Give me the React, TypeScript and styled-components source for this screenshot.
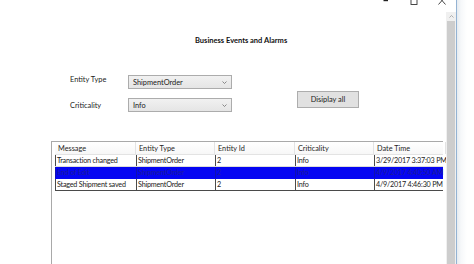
import React from "react";
import styled, { createGlobalStyle } from "styled-components";

const Global = createGlobalStyle`
  html, body { margin: 0; padding: 0; background: #ffffff; }
  body { font-family: Lato, "Noto Sans", "Liberation Sans", sans-serif; color: #1a1a1a; }
  * { box-sizing: border-box; }
`;

const Page = styled.div`
  display: flex;
  width: 474px;
  height: 264px;
  overflow: hidden;
`;

const Window = styled.div`
  width: 457px;
  display: flex;
  flex-direction: column;
  border-right: 1px solid #94b3d3;
  background: #ffffff;
`;

const Outside = styled.div`
  flex: 1;
  background: linear-gradient(to right, #e6ebf0 0px, #f6f8fa 4px, #ffffff 10px);
`;

const TitleBar = styled.div`
  height: 12px;
  display: flex;
  justify-content: flex-end;
  flex-shrink: 0;
`;

const Control = styled.div`
  width: 28px;
  height: 12px;
  display: flex;
  justify-content: center;
  align-items: flex-start;
`;

const Body = styled.div`
  flex: 1;
  display: flex;
  min-height: 0;
`;

const Content = styled.div`
  flex: 1;
  display: flex;
  flex-direction: column;
  overflow: hidden;
  min-width: 0;
`;

const ScrollBar = styled.div`
  width: 10px;
  display: flex;
  flex-direction: column;
  background: #f0f0f0;
`;

const ScrollArrow = styled.div`
  height: 9px;
  display: flex;
  align-items: center;
  justify-content: center;
  background: #f0f0f0;
`;

const ScrollThumb = styled.div`
  flex: 1;
  margin: 0 1px;
  background: #cdcdcd;
`;

const Heading = styled.div`
  padding: 24px 0 0 195px;
  font-size: 7.5px;
  font-weight: 700;
  line-height: 10px;
  color: #111;
`;

const Form = styled.div`
  display: grid;
  grid-template-columns: 58px 104px 65px 62px;
  grid-template-rows: 14px 14px;
  row-gap: 9px;
  margin: 29px 0 0 70px;
`;

const Label = styled.div<{ $row: number }>`
  grid-column: 1;
  grid-row: ${(p) => p.$row};
  font-size: 7.4px;
  line-height: 14px;
  color: #222;
  margin-top: ${(p) => (p.$row === 1 ? "-2px" : "1px")};
`;

const Combo = styled.div<{ $row: number }>`
  grid-column: 2;
  grid-row: ${(p) => p.$row};
  display: flex;
  align-items: center;
  justify-content: space-between;
  padding: 0 4px 0 4px;
  border: 1px solid #acacac;
  background: linear-gradient(#f1f1f1, #e5e5e5);
  font-size: 7.4px;
  color: #1a1a1a;
`;

const Button = styled.div`
  grid-column: 4;
  grid-row: 1 / 3;
  align-self: end;
  height: 17px;
  margin-bottom: 4px;
  display: flex;
  align-items: center;
  justify-content: center;
  border: 1px solid #adadad;
  background: #e1e1e1;
  font-size: 7.4px;
  color: #1a1a1a;
`;

const Table = styled.div`
  flex: 1;
  margin: 29px 0 0 51px;
  border-left: 1px solid #a9a9a9;
  border-top: 1px solid #a9a9a9;
  padding-left: 3px;
  display: flex;
  flex-direction: column;
  width: 392px;
`;

const HeaderRow = styled.div`
  display: flex;
  height: 13px;
  background: linear-gradient(#ffffff, #f7f7f7);
  border-bottom: 1px solid #e3e3e3;
`;

const HeaderCell = styled.div<{ $w: number }>`
  width: ${(p) => p.$w}px;
  flex-shrink: 0;
  padding-left: 3px;
  border-right: 1px solid #e3e3e3;
  font-size: 7.3px;
  line-height: 13px;
  color: #262626;
  white-space: nowrap;
  overflow: hidden;
`;

const Row = styled.div<{ $selected?: boolean; $last?: boolean }>`
  display: flex;
  height: 12px;
  background: ${(p) => (p.$selected ? "#0505f2" : "#ffffff")};
  border-bottom: 1px solid ${(p) => (p.$last ? "#4a4a4a" : p.$selected ? "#0505f2" : "#dcdcdc")};
`;

const Cell = styled.div<{ $w: number; $selected?: boolean }>`
  width: ${(p) => p.$w}px;
  flex-shrink: 0;
  padding-left: 1px;
  border-left: 1px solid ${(p) => (p.$selected ? "#1010b0" : "#4a4a4a")};
  font-size: 7.2px;
  letter-spacing: -0.2px;
  line-height: 11px;
  color: ${(p) => (p.$selected ? "#1c1c9a" : "#1a1a1a")};
  white-space: nowrap;
  overflow: hidden;
`;

const widths = [81, 79, 80, 79, 72];
const headers = ["Message", "Entity Type", "Entity Id", "Criticality", "Date Time"];
const rows = [
  ["Transaction changed", "ShipmentOrder", "2", "Info", "3/29/2017 3:37:03 PM"],
  ["End of Edit", "ShipmentOrder", "2", "Info", "4/9/2017 4:40:50 AM"],
  ["Staged Shipment saved", "ShipmentOrder", "2", "Info", "4/9/2017 4:46:30 PM"],
];

const Chevron = () => (
  <svg width="5" height="3" viewBox="0 0 5 3">
    <path d="M0.5 0.5 L2.5 2.5 L4.5 0.5" fill="none" stroke="#707070" strokeWidth="0.8" />
  </svg>
);

export default function App() {
  return (
    <Page>
      <Global />
      <Window>
        <TitleBar>
          <Control>
            <svg width="10" height="4" viewBox="0 0 10 4">
              <rect x="2.5" y="0" width="4.5" height="1.2" fill="#222" />
            </svg>
          </Control>
          <Control>
            <svg width="10" height="6" viewBox="0 0 10 6">
              <rect x="2" y="-4" width="6" height="8.5" fill="none" stroke="#333" strokeWidth="0.9" />
            </svg>
          </Control>
          <Control>
            <svg width="10" height="6" viewBox="0 0 10 6">
              <path d="M1.5 -3.5 L8.5 4.5 M8.5 -3.5 L1.5 4.5" stroke="#333" strokeWidth="0.9" />
            </svg>
          </Control>
        </TitleBar>
        <Body>
          <Content>
            <Heading>Business Events and Alarms</Heading>
            <Form>
              <Label $row={1}>Entity Type</Label>
              <Combo $row={1}>
                <span>ShipmentOrder</span>
                <Chevron />
              </Combo>
              <Label $row={2}>Criticality</Label>
              <Combo $row={2}>
                <span>Info</span>
                <Chevron />
              </Combo>
              <Button>Disiplay all</Button>
            </Form>
            <Table>
              <HeaderRow>
                {headers.map((h, i) => (
                  <HeaderCell key={h} $w={widths[i]}>
                    {h}
                  </HeaderCell>
                ))}
              </HeaderRow>
              {rows.map((r, ri) => (
                <Row key={ri} $selected={ri === 1} $last={ri === rows.length - 1}>
                  {r.map((c, ci) => (
                    <Cell key={ci} $w={widths[ci]} $selected={ri === 1}>
                      {c}
                    </Cell>
                  ))}
                </Row>
              ))}
            </Table>
          </Content>
          <ScrollBar>
            <ScrollArrow>
              <svg width="5" height="3" viewBox="0 0 5 3">
                <path d="M0.5 2.5 L2.5 0.5 L4.5 2.5" fill="none" stroke="#a0a0a0" strokeWidth="0.8" />
              </svg>
            </ScrollArrow>
            <ScrollThumb />
          </ScrollBar>
        </Body>
      </Window>
      <Outside />
    </Page>
  );
}
